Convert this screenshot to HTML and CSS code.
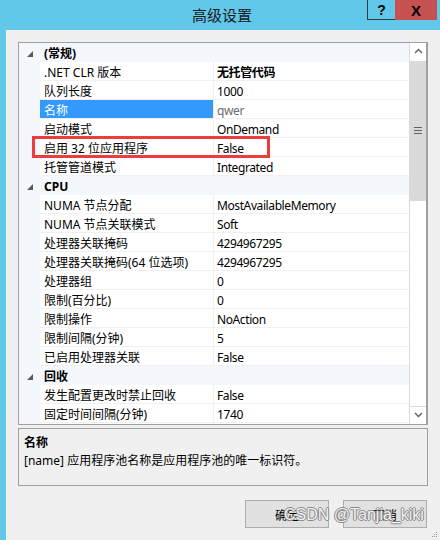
FILE: index.html
```html
<!DOCTYPE html>
<html lang="zh-CN">
<head>
<meta charset="utf-8">
<title>高级设置</title>
<link rel="stylesheet" href="styles.css">
</head>
<body>
<div class="window">
  <div class="titlebar">
    <div class="title">高级设置</div>
    <div class="tbtn help">?</div>
    <div class="tbtn close">X</div>
  </div>
  <div class="client">
    <div class="grid">
      <div class="rows">
        <div class="cat"><span class="tri"><svg width="6" height="6" viewBox="0 0 6 6"><polygon points="6,0 6,6 0,6" fill="#5a5a5a"/></svg></span><span class="catname">(常规)</span></div>
        <div class="row"><span class="mg"></span><span class="nm">.NET CLR 版本</span><span class="vl b">无托管代码</span></div>
        <div class="row"><span class="mg"></span><span class="nm">队列长度</span><span class="vl">1000</span></div>
        <div class="row sel"><span class="mg"></span><span class="nm">名称</span><span class="vl dim">qwer</span></div>
        <div class="row"><span class="mg"></span><span class="nm">启动模式</span><span class="vl">OnDemand</span></div>
        <div class="row"><span class="mg"></span><span class="nm">启用 32 位应用程序</span><span class="vl">False</span></div>
        <div class="row"><span class="mg"></span><span class="nm">托管管道模式</span><span class="vl">Integrated</span></div>
        <div class="cat"><span class="tri"><svg width="6" height="6" viewBox="0 0 6 6"><polygon points="6,0 6,6 0,6" fill="#5a5a5a"/></svg></span><span class="catname">CPU</span></div>
        <div class="row"><span class="mg"></span><span class="nm">NUMA 节点分配</span><span class="vl">MostAvailableMemory</span></div>
        <div class="row"><span class="mg"></span><span class="nm">NUMA 节点关联模式</span><span class="vl">Soft</span></div>
        <div class="row"><span class="mg"></span><span class="nm">处理器关联掩码</span><span class="vl">4294967295</span></div>
        <div class="row"><span class="mg"></span><span class="nm">处理器关联掩码(64 位选项)</span><span class="vl">4294967295</span></div>
        <div class="row"><span class="mg"></span><span class="nm">处理器组</span><span class="vl">0</span></div>
        <div class="row"><span class="mg"></span><span class="nm">限制(百分比)</span><span class="vl">0</span></div>
        <div class="row"><span class="mg"></span><span class="nm">限制操作</span><span class="vl">NoAction</span></div>
        <div class="row"><span class="mg"></span><span class="nm">限制间隔(分钟)</span><span class="vl">5</span></div>
        <div class="row"><span class="mg"></span><span class="nm">已启用处理器关联</span><span class="vl">False</span></div>
        <div class="cat"><span class="tri"><svg width="6" height="6" viewBox="0 0 6 6"><polygon points="6,0 6,6 0,6" fill="#5a5a5a"/></svg></span><span class="catname">回收</span></div>
        <div class="row"><span class="mg"></span><span class="nm">发生配置更改时禁止回收</span><span class="vl">False</span></div>
        <div class="row"><span class="mg"></span><span class="nm">固定时间间隔(分钟)</span><span class="vl">1740</span></div>
        <div class="row"><span class="mg"></span><span class="nm">&nbsp;</span><span class="vl">&nbsp;</span></div>
      </div>
      <div class="sbar">
        <div class="sarrow"><svg width="9" height="6" viewBox="0 0 9 6"><polyline points="1,5 4.5,1.5 8,5" fill="none" stroke="#606060" stroke-width="1.4"/></svg></div>
        <div class="thumb"><svg width="8" height="8" viewBox="0 0 8 8"><path d="M0 0.5H8M0 3.5H8M0 6.5H8" stroke="#606060" stroke-width="1"/></svg></div>
        <div class="track"></div>
        <div class="sarrow"><svg width="9" height="6" viewBox="0 0 9 6"><polyline points="1,1 4.5,4.5 8,1" fill="none" stroke="#606060" stroke-width="1.4"/></svg></div>
      </div>
      <div class="mark"></div>
    </div>
    <div class="desc">
      <div class="dtitle">名称</div>
      <div class="dtext">[name] 应用程序池名称是应用程序池的唯一标识符。</div>
    </div>
    <div class="actions">
      <div class="btn">确定</div>
      <div class="btn">取消</div>
    </div>
    <div class="watermark">CSDN @Tanjia_kiki</div>
    <div class="grip"><svg width="6" height="6" viewBox="0 0 6 6"><g fill="#9a9a9a"><rect x="4" y="0" width="1" height="1"/><rect x="2" y="2" width="1" height="1"/><rect x="4" y="2" width="1" height="1"/><rect x="0" y="4" width="1" height="1"/><rect x="2" y="4" width="1" height="1"/><rect x="4" y="4" width="1" height="1"/></g></svg></div>
  </div>
</div>
</body>
</html>
```
FILE: styles.css
```css
html, body {
  margin: 0;
  padding: 0;
}
body {
  width: 440px;
  height: 540px;
  overflow: hidden;
  font-family: "Noto Sans", "Noto Sans CJK SC", sans-serif;
  font-size: 12px;
  color: #000;
}
.window {
  width: 440px;
  height: 540px;
  display: flex;
  flex-direction: column;
  background: #62c8ea;
}
.titlebar {
  height: 30px;
  display: flex;
  align-items: flex-start;
  padding-left: 77px;
  padding-right: 3px;
  flex-shrink: 0;
}
.title {
  flex: 1;
  text-align: center;
  font-family: "Noto Sans CJK SC", sans-serif;
  font-size: 15px;
  line-height: 29px;
  color: #1a1a1a;
}
.tbtn {
  height: 20px;
  display: flex;
  align-items: center;
  justify-content: center;
  font-family: "Liberation Sans", sans-serif;
  font-weight: bold;
  font-size: 14px;
  box-sizing: border-box;
}
.help {
  width: 28px;
  border-left: 1px solid #2c3e48;
  border-bottom: 1px solid #2c3e48;
}
.close {
  width: 42px;
  background: #c75050;
  font-size: 15px;
}
.client {
  position: relative;
  flex: 1;
  margin-left: 6px;
  background: #f0f0f0;
  display: flex;
  flex-direction: column;
  padding: 12px 12px 0 12px;
}
.grid {
  position: relative;
  width: 410px;
  height: 383px;
  box-sizing: border-box;
  border: 1px solid #a0a0a0;
  border-right-width: 2px;
  display: flex;
  background: #fff;
}
.rows {
  width: 391px;
  overflow: hidden;
  height: 381px;
}
.cat {
  height: 19px;
  display: flex;
  background: #f4f7fc;
  box-sizing: border-box;
}
.tri {
  width: 21px;
  display: flex;
  justify-content: center;
  padding-top: 8px;
  padding-left: 1px;
  box-sizing: border-box;
}
.catname {
  padding-left: 4px;
  padding-top: 3px;
  font-weight: bold;
  line-height: 16px;
}
.row {
  height: 19px;
  display: grid;
  grid-template-columns: 21px 174px 1fr;
}
.mg {
  background: #f4f7fc;
}
.nm, .vl {
  box-sizing: border-box;
  height: 19px;
  padding-top: 4px;
  line-height: 14px;
  border-bottom: 1px solid #f0f0f0;
  white-space: nowrap;
}
.nm {
  padding-left: 4px;
  border-right: 1px solid #f0f0f0;
}
.vl {
  padding-left: 3px;
  letter-spacing: -0.4px;
}
.b {
  font-weight: bold;
}
.dim {
  color: #6d6d6d;
}
.sel .nm {
  background: #3399ff;
  color: #fff;
}
.sbar {
  width: 16px;
  border-left: 1px solid #dadada;
  display: flex;
  flex-direction: column;
  background: #fff;
}
.sarrow {
  height: 16px;
  display: flex;
  align-items: center;
  justify-content: center;
  background: #fff;
}
.thumb {
  margin-top: 2px;
  height: 140px;
  background: #dadada;
  display: flex;
  align-items: center;
  justify-content: center;
}
.track {
  flex: 1;
}
.sarrow:last-child {
  border-top: 1px solid #dadada;
  margin-bottom: 1px;
}
.mark {
  position: absolute;
  left: 13px;
  top: 93px;
  width: 238px;
  height: 22px;
  box-sizing: border-box;
  border: 3px solid #ef3b3b;
}
.desc {
  margin-top: 3px;
  width: 410px;
  height: 58px;
  box-sizing: border-box;
  border: 1px solid #a0a0a0;
  padding: 5px 5px 3px 5px;
}
.dtitle {
  font-weight: bold;
  line-height: 18px;
}
.dtext {
  line-height: 18px;
}
.actions {
  display: flex;
  justify-content: flex-end;
  gap: 14px;
  margin-top: 14px;
  padding-right: 1px;
}
.btn {
  width: 84px;
  height: 28px;
  box-sizing: border-box;
  border: 1px solid #adadad;
  background: #e1e1e1;
  display: flex;
  align-items: center;
  justify-content: center;
  font-family: "Noto Sans CJK SC", sans-serif;
}
.watermark {
  position: absolute;
  left: 278px;
  top: 476px;
  font-family: "Liberation Sans", sans-serif;
  font-size: 16px;
  color: rgba(255, 255, 255, 0.9);
  text-shadow: 1px 0 0 #8a8a8a, -1px 0 0 #8a8a8a, 0 1px 0 #8a8a8a, 0 -1px 0 #8a8a8a;
  white-space: nowrap;
}
.grip {
  position: absolute;
  right: 2px;
  bottom: 2px;
  line-height: 0;
}
```
